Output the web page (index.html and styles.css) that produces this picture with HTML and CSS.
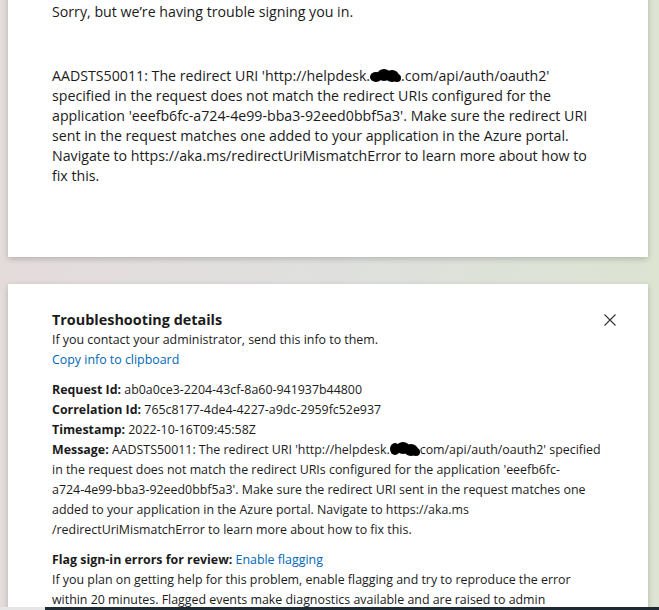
FILE: index.html
```html
<!DOCTYPE html>
<html lang="en">
<head>
<meta charset="utf-8">
<title>Sign in error</title>
<link rel="stylesheet" href="styles.css">
</head>
<body>
<div class="page">
  <section class="card card-top">
    <p class="lead">Sorry, but we’re having trouble signing you in.</p>
    <p class="error">AADSTS50011: The redirect URI 'http://helpdesk.<span class="redact"><svg width="31" height="14" viewBox="0 0 31 14"><ellipse cx="6" cy="8" rx="6" ry="5"/><ellipse cx="14" cy="6" rx="7" ry="6"/><ellipse cx="22" cy="7" rx="7" ry="6"/><ellipse cx="27" cy="9" rx="4" ry="4"/></svg></span>.com/api/auth/oauth2'<br>specified in the request does not match the redirect URIs configured for the<br>application 'eeefb6fc-a724-4e99-bba3-92eed0bbf5a3'. Make sure the redirect URI<br>sent in the request matches one added to your application in the Azure portal.<br>Navigate to https://aka.ms/redirectUriMismatchError to learn more about how to<br>fix this.</p>
  </section>

  <section class="card card-details">
    <div class="head">
      <h2 class="title">Troubleshooting details</h2>
      <svg class="close" width="12" height="12" viewBox="0 0 12 12"><path d="M0.5 0.5 L11.5 11.5 M11.5 0.5 L0.5 11.5" stroke="#333" stroke-width="1.1" fill="none"/></svg>
    </div>
    <p class="line">If you contact your administrator, send this info to them.</p>
    <p class="line link">Copy info to clipboard</p>
    <div class="meta">
      <p class="line"><b>Request Id:</b> ab0a0ce3-2204-43cf-8a60-941937b44800</p>
      <p class="line"><b>Correlation Id:</b> 765c8177-4de4-4227-a9dc-2959fc52e937</p>
      <p class="line"><b>Timestamp:</b> 2022-10-16T09:45:58Z</p>
      <p class="line"><b>Message:</b> AADSTS50011: The redirect URI 'http://helpdesk.<span class="redact"><svg width="30" height="14" viewBox="0 0 30 14"><ellipse cx="5" cy="7" rx="5" ry="6"/><ellipse cx="13" cy="6" rx="7" ry="6"/><ellipse cx="21" cy="8" rx="7" ry="6"/><ellipse cx="26" cy="10" rx="4" ry="4"/></svg></span>com/api/auth/oauth2' specified<br>in the request does not match the redirect URIs configured for the application 'eeefb6fc-<br>a724-4e99-bba3-92eed0bbf5a3'. Make sure the redirect URI sent in the request matches one<br>added to your application in the Azure portal. Navigate to https://aka.ms<br>/redirectUriMismatchError to learn more about how to fix this.</p>
    </div>
    <div class="flag">
      <p class="line"><b>Flag sign-in errors for review:</b> <span class="link">Enable flagging</span></p>
      <p class="line">If you plan on getting help for this problem, enable flagging and try to reproduce the error<br>within 20 minutes. Flagged events make diagnostics available and are raised to admin</p>
    </div>
  </section>
</div>
<div class="taskbar"><div class="tb-left"></div><div class="tb-right"></div></div>
</body>
</html>
```
FILE: styles.css
```css
html, body {
  margin: 0;
  padding: 0;
  height: 100%;
  overflow: hidden;
}
body {
  background: linear-gradient(90deg, #e4dbdb 0%, #e0e0df 45%, #dde3d8 80%, #dde4d2 100%);
  font-family: "Open Sans", "Noto Sans", sans-serif;
  color: #1b1b1b;
}
p { margin: 0; white-space: nowrap; }
.page {
  display: flex;
  flex-direction: column;
  gap: 27px;
  padding: 0 11px 0 8px;
}
.card {
  background: #fff;
  box-shadow: 0 2px 6px rgba(0, 0, 0, 0.2);
  padding-left: 44px;
  padding-right: 32px;
}
.card-top {
  margin-top: -40px;
  padding-top: 42px;
  padding-bottom: 71px;
  font-size: 14.2px;
  line-height: 20px;
}
.lead { margin-bottom: 44px; }
.redact {
  display: inline-block;
  vertical-align: -2px;
  line-height: 0;
}
.card-details {
  padding-top: 26px;
  padding-bottom: 40px;
  font-size: 12.4px;
  line-height: 20px;
}
.head {
  display: flex;
  justify-content: space-between;
  align-items: center;
}
.title {
  margin: 0;
  font-size: 14.4px;
  line-height: 20px;
  font-weight: 700;
}
.link { color: #0067b8; }
.meta { margin-top: 10px; }
.flag { margin-top: 10px; }
b { font-weight: 700; }
.taskbar {
  position: fixed;
  left: 0;
  right: 0;
  bottom: 0;
  height: 3px;
  display: flex;
}
.tb-left { width: 45px; background: #e6e6e6; }
.tb-right { flex: 1; background: #1d2a33; }
```
